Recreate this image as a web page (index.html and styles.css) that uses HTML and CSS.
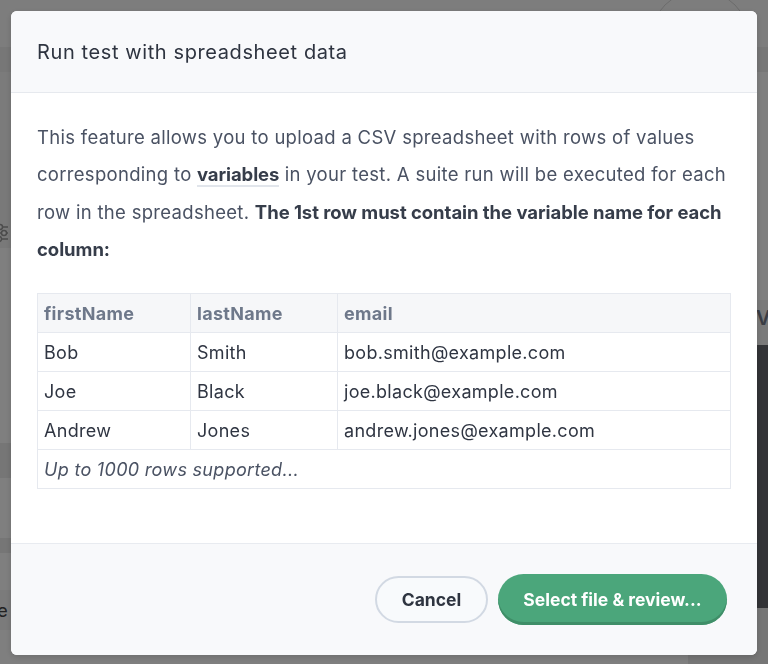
FILE: index.html
```html
<!DOCTYPE html>
<html lang="en">

<head>
    <meta charset="UTF-8">
    <meta name="viewport" content="width=device-width, initial-scale=1.0">
    <title>Run test with spreadsheet data</title>
    <link rel="stylesheet" href="styles.css">
</head>

<body>
    <div class="page">
        <div class="topbar">
            <div class="avatar"></div>
        </div>
        <div class="toolbar"></div>
        <div class="content">
            <div class="main">
                <div class="row row-tall"></div>
                <div class="row row-icon">
                    <svg class="sliders" width="14" height="22" viewBox="0 0 14 22">
                        <path d="M0 5h14M0 11h14M0 17h14" stroke="#999" stroke-width="1.5" fill="none" />
                        <circle cx="6" cy="5" r="2.5" fill="#fff" stroke="#999" stroke-width="1.5" />
                        <circle cx="10" cy="11" r="2.5" fill="#fff" stroke="#999" stroke-width="1.5" />
                        <circle cx="5" cy="17" r="2.5" fill="#fff" stroke="#999" stroke-width="1.5" />
                    </svg>
                </div>
                <div class="row row-gap"></div>
                <div class="row row-band"></div>
                <div class="row row-gap2"></div>
                <div class="row row-band2"></div>
                <div class="row row-text">Update</div>
                <div class="meta">
                    <span class="clock">&#9711;</span> 2:40:12 PM
                    <span class="pencil">&#9998;</span> Edit
                </div>
            </div>
            <div class="side">
                <div class="side-head">Variables</div>
                <div class="side-dark"></div>
                <div class="side-foot"></div>
            </div>
        </div>
    </div>

    <div class="overlay">
        <div class="modal">
            <div class="modal-header">
                <h2>Run test with spreadsheet data</h2>
            </div>
            <div class="modal-body">
                <p>
                    This feature allows you to upload a CSV spreadsheet with rows of values
                    corresponding to <span class="term">variables</span> in your test. A suite run
                    will be executed for each row in the spreadsheet. <strong>The 1st row must
                    contain the variable name for each column:</strong>
                </p>
                <table class="sample">
                    <thead>
                        <tr>
                            <th class="col-first">firstName</th>
                            <th class="col-last">lastName</th>
                            <th>email</th>
                        </tr>
                    </thead>
                    <tbody>
                        <tr>
                            <td>Bob</td>
                            <td>Smith</td>
                            <td>bob.smith@example.com</td>
                        </tr>
                        <tr>
                            <td>Joe</td>
                            <td>Black</td>
                            <td>joe.black@example.com</td>
                        </tr>
                        <tr>
                            <td>Andrew</td>
                            <td>Jones</td>
                            <td>andrew.jones@example.com</td>
                        </tr>
                        <tr>
                            <td class="more" colspan="3">Up to 1000 rows supported...</td>
                        </tr>
                    </tbody>
                </table>
            </div>
            <div class="modal-footer">
                <button class="btn btn-cancel">Cancel</button>
                <button class="btn btn-primary">Select file &amp; review...</button>
            </div>
        </div>
    </div>
</body>

</html>
```

FILE: styles.css
```css
* {
    box-sizing: border-box;
}

body {
    margin: 0;
    font-family: Inter, "Noto Sans", sans-serif;
    background-color: #fff;
    height: 100vh;
    overflow: hidden;
}

/* page behind the dialog */
.page {
    display: flex;
    flex-direction: column;
    height: 100vh;
    background-color: #fff;
}

.topbar {
    height: 47px;
    background-color: #fafafa;
    display: flex;
    justify-content: flex-end;
    padding-right: 18px;
}

.avatar {
    width: 100px;
    height: 100px;
    margin-top: -10px;
    border: 1px solid #d8d8d8;
    border-radius: 50%;
    flex-shrink: 0;
}

.toolbar {
    height: 25px;
    background-color: #eeeeee;
}

.content {
    flex: 1;
    display: flex;
    min-height: 0;
}

.main {
    flex: 1;
    min-width: 0;
    overflow: hidden;
    display: flex;
    flex-direction: column;
}

.row-tall {
    height: 78px;
    background-color: #f6f6f6;
}

.row-icon {
    height: 98px;
    background-color: #f2f2f2;
    display: flex;
    align-items: flex-end;
    padding-bottom: 4px;
    margin-left: -6px;
}

.row-gap {
    height: 195px;
}

.row-band {
    height: 35px;
    background-color: #ececec;
}

.row-gap2 {
    height: 60px;
}

.row-band2 {
    height: 15px;
    background-color: #ececec;
}

.row-text {
    height: 40px;
    margin-top: 37px;
    display: flex;
    align-items: center;
    font-size: 18px;
    color: #444;
    margin-left: -54px;
    background-color: #f6f6f6;
}

.meta {
    flex: 1;
    display: flex;
    align-items: flex-start;
    gap: 8px;
    padding: 0 0 0 478px;
    font-size: 17px;
    color: #666;
    white-space: nowrap;
}

.pencil {
    margin-left: 18px;
}

.side {
    width: 80px;
    display: flex;
    flex-direction: column;
    padding-top: 228px;
    background-color: #fff;
}

.side-head {
    height: 45px;
    background-color: #f4f4f4;
    font-size: 20px;
    font-weight: 600;
    color: #747a8a;
    padding: 6px 0 0 68px;
    white-space: nowrap;
    overflow: hidden;
}

.side-dark {
    height: 263px;
    background-color: #66686e;
}

.side-foot {
    flex: 1;
    background-color: #ececec;
}

/* dialog */
.overlay {
    position: fixed;
    inset: 0;
    background-color: rgba(0, 0, 0, 0.5);
    padding: 11px;
}

.modal {
    height: 644px;
    display: flex;
    flex-direction: column;
    background-color: #fff;
    border-radius: 6px;
    overflow: hidden;
    box-shadow: 0 2px 6px rgba(0, 0, 0, 0.15);
}

.modal-header {
    height: 82px;
    flex-shrink: 0;
    display: flex;
    align-items: center;
    padding: 0 26px;
    background-color: #f8f9fb;
    border-bottom: 1px solid #e6e9ee;
}

.modal-header h2 {
    margin: 0;
    font-size: 20px;
    font-weight: 400;
    letter-spacing: 0.6px;
    color: #2e3440;
    padding-top: 1px;
}

.modal-body {
    flex: 1;
    padding: 26px 26px 25px;
}

.modal-body p {
    margin: 0 0 25px;
    font-size: 18.5px;
    letter-spacing: 0.3px;
    line-height: 37.3px;
    color: #4a5263;
}

.modal-body strong {
    font-weight: 700;
    letter-spacing: -0.05px;
    color: #363d4a;
}

.term {
    font-weight: 700;
    letter-spacing: -0.1px;
    color: #363d4a;
    border-bottom: 2px solid #e1e5eb;
}

.sample {
    width: 100%;
    border-collapse: collapse;
    font-size: 18px;
    letter-spacing: 0.3px;
    color: #2f3542;
}

.sample th,
.sample td {
    height: 39px;
    padding: 0 6px;
    text-align: left;
    border: 1px solid #e6e9ef;
}

.sample th {
    background-color: #f6f7f9;
    font-weight: 700;
    color: #6e788a;
}

.col-first {
    width: 153px;
}

.col-last {
    width: 147px;
}

.sample .more {
    font-style: italic;
    color: #4a5263;
}

.modal-footer {
    height: 112px;
    flex-shrink: 0;
    display: flex;
    justify-content: flex-end;
    align-items: center;
    gap: 10px;
    padding: 0 30px 0 0;
    background-color: #f8f9fb;
    border-top: 1px solid #e8ebf0;
}

.btn {
    border: none;
    outline: none;
    cursor: pointer;
    font-family: Inter, "Noto Sans", sans-serif;
    font-size: 17.5px;
    font-weight: 700;
    border-radius: 999px;
}

.btn-cancel {
    width: 113px;
    height: 47px;
    background-color: #f8fafc;
    border: 2px solid #d2d9e3;
    color: #2e3440;
}

.btn-primary {
    width: 229px;
    height: 51px;
    background-color: #4ba67b;
    color: #fff;
    box-shadow: inset 0 -3px 0 #3f8e68;
}
```
